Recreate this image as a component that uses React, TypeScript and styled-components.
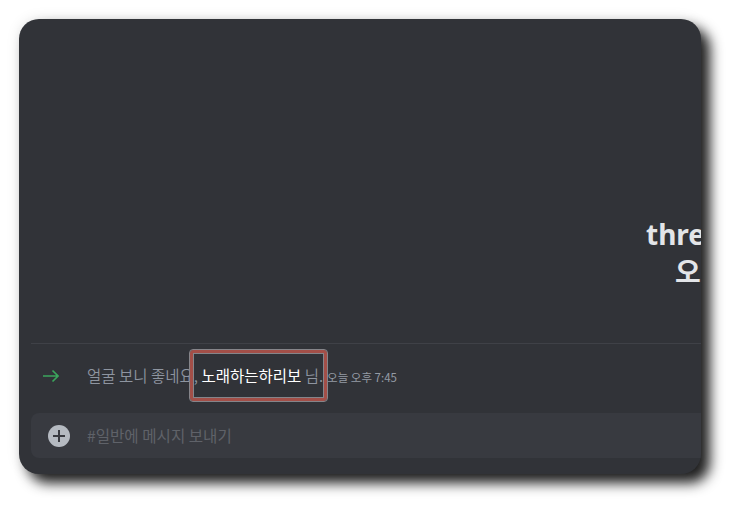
import React from "react";
import styled, { createGlobalStyle } from "styled-components";

const Global = createGlobalStyle`
  html, body { margin: 0; padding: 0; background: #fff; }
  body { width: 736px; height: 509px; overflow: hidden; font-family: "Noto Sans", "Noto Sans CJK KR", sans-serif; }
`;

const Page = styled.div`
  padding: 19px 35px 35px 19px;
`;

const Card = styled.main`
  width: 682px;
  height: 455px;
  display: flex;
  flex-direction: column;
  background: #313338;
  border-radius: 20px;
  box-shadow: 9px 9px 13px rgba(0, 0, 0, 0.88), 0 0 14px rgba(0, 0, 0, 0.1);
  overflow: hidden;
`;

const Hero = styled.section`
  flex: 1;
  display: flex;
  flex-direction: column;
  justify-content: flex-end;
  padding-bottom: 52px;
  min-height: 0;
`;

const HeroLine = styled.div<{ $indent: number }>`
  padding-left: ${(p) => p.$indent}px;
  color: #e3e5e8;
  font-family: "Noto Sans", "Noto Sans CJK KR", sans-serif;
  font-size: 28px;
  font-weight: 700;
  line-height: 38px;
  white-space: nowrap;
`;

const Divider = styled.hr`
  margin: 0 0 0 12px;
  height: 1px;
  border: 0;
  background: #3f4147;
`;

const Message = styled.div`
  height: 69px;
  display: flex;
  align-items: center;
  padding: 0 0 6px 24px;
  box-sizing: border-box;
`;

const ArrowSlot = styled.span`
  width: 44px;
  display: flex;
  align-items: center;
`;

const Body = styled.div`
  position: relative;
  color: #8e95a0;
  font-family: "Noto Sans CJK KR", sans-serif;
  font-size: 15.5px;
  font-weight: 350;
  line-height: 22px;
  white-space: nowrap;
`;

const Name = styled.strong`
  color: #ffffff;
  font-weight: 400;
`;

const Time = styled.time`
  margin-left: 4px;
  color: #949ba4;
  font-size: 11.5px;
  font-weight: 400;
`;

const Highlight = styled.span`
  position: absolute;
  left: 103px;
  top: -14px;
  width: 131px;
  height: 45px;
  border: 3px solid #a34f48;
  border-radius: 3px;
  outline: 1px solid #85858a;
  box-shadow: inset 0 0 0 1px #85858a;
`;

const Composer = styled.div`
  height: 45px;
  margin-left: 12px;
  display: flex;
  align-items: center;
  padding-left: 17px;
  background: #383a40;
  border-radius: 8px 0 0 8px;
`;

const Plus = styled.span`
  width: 22px;
  height: 22px;
  margin-right: 17px;
  display: block;
`;

const Placeholder = styled.span`
  color: #5f6269;
  font-family: "Noto Sans CJK KR", sans-serif;
  font-size: 15.6px;
  position: relative;
  top: -1px;
`;

const Foot = styled.div`
  height: 16px;
`;

export default function App() {
  return (
    <Page>
      <Global />
      <Card>
        <Hero>
          <HeroLine $indent={627}>three</HeroLine>
          <HeroLine $indent={656}>오신</HeroLine>
        </Hero>
        <Divider />
        <Message>
          <ArrowSlot>
            <svg width="16" height="14" viewBox="0 0 16 14" fill="none" stroke="#3ba55c" strokeWidth="1.6">
              <path d="M0 7h15M9.500 1.500 15 7l-5.500 5.500" />
            </svg>
          </ArrowSlot>
          <Body>
            얼굴 보니 좋네요, <Name>노래하는하리보</Name> 님.
            <Time>오늘 오후 7:45</Time>
            <Highlight />
          </Body>
        </Message>
        <Composer>
          <Plus>
            <svg width="22" height="22" viewBox="0 0 22 22">
              <circle cx="11" cy="11" r="11" fill="#b5bac1" />
              <path d="M11 5v12M5 11h12" stroke="#383a40" strokeWidth="2" />
            </svg>
          </Plus>
          <Placeholder>#일반에 메시지 보내기</Placeholder>
        </Composer>
        <Foot />
      </Card>
    </Page>
  );
}
